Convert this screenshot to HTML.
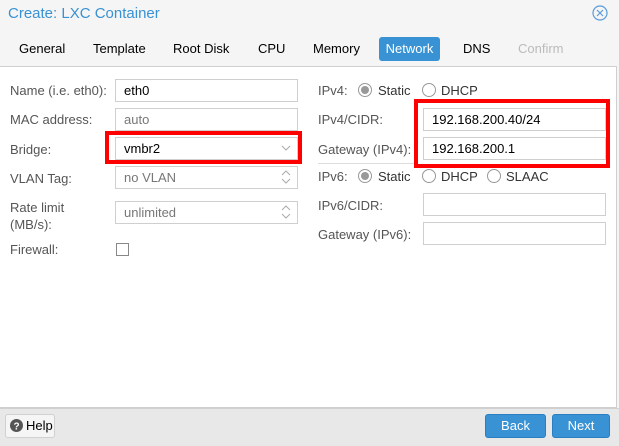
<!DOCTYPE html>
<html><head><style>
*{box-sizing:border-box;margin:0;padding:0}
body{width:619px;height:446px;background:#f5f5f5;font-family:"Liberation Sans",Arial,sans-serif;font-size:13px;color:#000;position:relative;overflow:hidden}
.a{position:absolute;white-space:nowrap}
.title{left:8px;top:5px;font-size:15px;color:#3892d4}
.tab{top:41px;font-size:13px;color:#000}
.body{left:0;top:66px;width:617px;height:342px;background:#fff;border:1px solid #cfcfcf;border-left:none}
.lbl{color:#555;font-size:13px}
.fld{border:1px solid #cfcfcf;background:#fff;height:23px;padding-left:8px;line-height:21px;font-size:13px}
.dis{color:#777}
.red{border:4px solid #f00}
.radio{width:14px;height:14px;border:1px solid #999;border-radius:50%;background:#fff}
.radio.on::after{content:"";position:absolute;left:2px;top:2px;width:8px;height:8px;border-radius:50%;background:#999}
.btn{height:24px;border-radius:3px;text-align:center;line-height:22px;font-size:13px}
.blue{background:#3892d4;border:1px solid #2a7fc0;color:#fff}
.foot{left:0;top:408px;width:619px;height:38px;background:#e8e8e8;border-top:1px solid #d0d0d0}
</style></head><body>
<div class="a title">Create: LXC Container</div>
<svg class="a" style="left:592px;top:5px" width="16" height="16" viewBox="0 0 16 16"><circle cx="8" cy="8" r="7" fill="none" stroke="#5a9bd8" stroke-width="1.2"/><path d="M5 5L11 11M11 5L5 11" stroke="#5a9bd8" stroke-width="1.2"/></svg>
<div class="a tab" style="left:19px">General</div>
<div class="a tab" style="left:93px">Template</div>
<div class="a tab" style="left:173px">Root Disk</div>
<div class="a tab" style="left:258px">CPU</div>
<div class="a tab" style="left:313px">Memory</div>
<div class="a" style="left:379px;top:37px;width:61px;height:24px;background:#3892d4;border-radius:3px;color:#fff;text-align:center;line-height:23px">Network</div>
<div class="a tab" style="left:463px">DNS</div>
<div class="a tab" style="left:518px;color:#bbb">Confirm</div>
<div class="a body"></div>

<div class="a lbl" style="left:10px;top:83px">Name (i.e. eth0):</div>
<div class="a fld" style="left:115px;top:79px;width:183px">eth0</div>
<div class="a lbl" style="left:10px;top:112px">MAC address:</div>
<div class="a fld dis" style="left:115px;top:108px;width:183px">auto</div>
<div class="a lbl" style="left:10px;top:142px">Bridge:</div>
<div class="a fld" style="left:115px;top:137px;width:183px">vmbr2</div>
<svg class="a" style="left:281px;top:145px" width="10" height="6"><path d="M1 1L5 5L9 1" fill="none" stroke="#aaa"/></svg>
<div class="a red" style="left:105px;top:131px;width:197px;height:33px"></div>
<div class="a lbl" style="left:10px;top:171px">VLAN Tag:</div>
<div class="a fld dis" style="left:115px;top:166px;width:183px">no VLAN</div>
<svg class="a" style="left:281px;top:169px" width="10" height="16"><path d="M1 6L5 2L9 6M1 10L5 14L9 10" fill="none" stroke="#aaa"/></svg>
<div class="a lbl" style="left:10px;top:199px;line-height:17px">Rate limit<br>(MB/s):</div>
<div class="a fld dis" style="left:115px;top:201px;width:183px">unlimited</div>
<svg class="a" style="left:281px;top:204px" width="10" height="16"><path d="M1 6L5 2L9 6M1 10L5 14L9 10" fill="none" stroke="#aaa"/></svg>
<div class="a lbl" style="left:10px;top:242px">Firewall:</div>
<div class="a" style="left:116px;top:243px;width:13px;height:13px;border:1px solid #888;background:#fff"></div>

<div class="a lbl" style="left:318px;top:83px">IPv4:</div>
<div class="a radio on" style="left:358px;top:83px"></div>
<div class="a" style="left:378px;top:83px;color:#333">Static</div>
<div class="a radio" style="left:422px;top:83px"></div>
<div class="a" style="left:441px;top:83px;color:#333">DHCP</div>
<div class="a lbl" style="left:318px;top:112px">IPv4/CIDR:</div>
<div class="a fld" style="left:423px;top:108px;width:183px">192.168.200.40/24</div>
<div class="a lbl" style="left:318px;top:142px">Gateway (IPv4):</div>
<div class="a fld" style="left:423px;top:137px;width:183px">192.168.200.1</div>
<div class="a red" style="left:414px;top:99px;width:196px;height:69px"></div>
<div class="a" style="left:318px;top:163px;width:96px;height:1px;background:#ddd"></div>
<div class="a lbl" style="left:318px;top:169px">IPv6:</div>
<div class="a radio on" style="left:358px;top:169px"></div>
<div class="a" style="left:378px;top:169px;color:#333">Static</div>
<div class="a radio" style="left:422px;top:169px"></div>
<div class="a" style="left:441px;top:169px;color:#333">DHCP</div>
<div class="a radio" style="left:487px;top:169px"></div>
<div class="a" style="left:506px;top:169px;color:#333">SLAAC</div>
<div class="a lbl" style="left:318px;top:198px">IPv6/CIDR:</div>
<div class="a fld" style="left:423px;top:193px;width:183px"></div>
<div class="a lbl" style="left:318px;top:227px">Gateway (IPv6):</div>
<div class="a fld" style="left:423px;top:222px;width:183px"></div>

<div class="a foot"></div>
<div class="a btn" style="left:5px;top:414px;width:50px;background:#f5f5f5;border:1px solid #d0d0d0"></div>
<div class="a" style="left:26px;top:418px">Help</div>
<svg class="a" style="left:10px;top:419px" width="13" height="13"><circle cx="6.5" cy="6.5" r="6.5" fill="#555"/><text x="6.5" y="10.5" font-size="10" font-weight="bold" fill="#fff" text-anchor="middle" font-family="Liberation Sans">?</text></svg>
<div class="a btn blue" style="left:485px;top:414px;width:61px">Back</div>
<div class="a btn blue" style="left:552px;top:414px;width:58px">Next</div>
</body></html>
